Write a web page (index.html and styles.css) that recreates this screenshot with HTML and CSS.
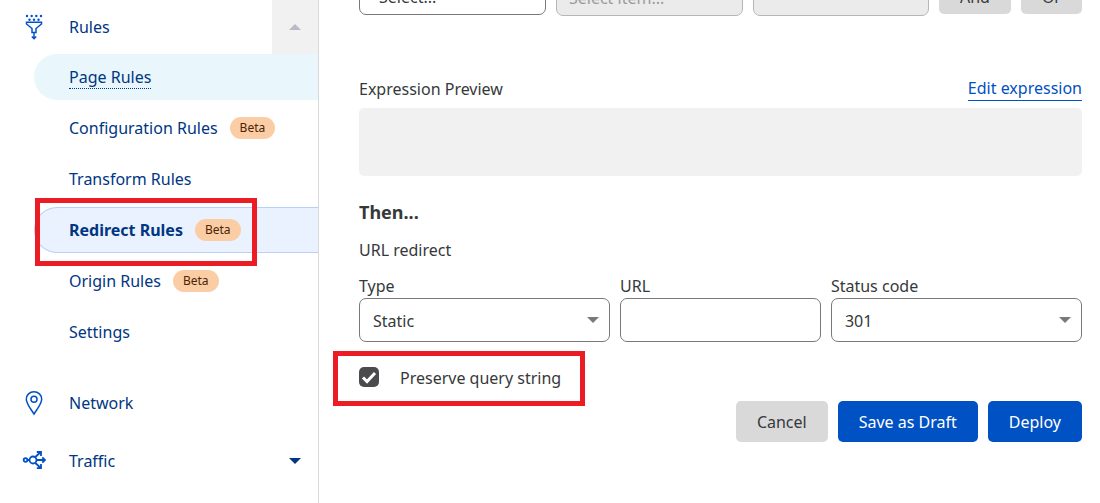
FILE: index.html
```html
<!DOCTYPE html>
<html lang="en">
<head>
    <meta charset="UTF-8">
    <meta name="viewport" content="width=device-width, initial-scale=1.0">
    <title>Redirect Rules</title>
    <link rel="stylesheet" href="styles.css">
</head>
<body>
    <nav class="sidebar">
        <div class="nav-row nav-row-open">
            <svg class="nav-icon" viewBox="0 0 24 26">
                <g fill="#0051c3">
                    <circle cx="5" cy="2" r="1.2"/><circle cx="9.7" cy="2" r="1.2"/><circle cx="14.3" cy="2" r="1.2"/><circle cx="19" cy="2" r="1.2"/>
                    <circle cx="7.5" cy="5.7" r="1.2"/><circle cx="12" cy="5.7" r="1.2"/><circle cx="16.5" cy="5.7" r="1.2"/>
                </g>
                <path d="M4.500 8.200H19.500V10L14 14.500V18.500H10V14.500L4.500 10ZM12 19V25M9.800 22.500L12 24.700L14.200 22.500"/>
            </svg>
            <a href="#">Rules</a>
            <button class="nav-toggle" aria-label="Collapse Rules"><span class="arrow-up"></span></button>
        </div>
        <ul class="subnav">
            <li><a class="subnav-link hovered" href="#"><span>Page Rules</span></a></li>
            <li><a class="subnav-link" href="#"><span>Configuration Rules</span><span class="badge">Beta</span></a></li>
            <li><a class="subnav-link" href="#"><span>Transform Rules</span></a></li>
            <li class="marked marked-nav"><a class="subnav-link active" href="#"><span>Redirect Rules</span><span class="badge">Beta</span></a></li>
            <li><a class="subnav-link" href="#"><span>Origin Rules</span><span class="badge">Beta</span></a></li>
            <li><a class="subnav-link" href="#"><span>Settings</span></a></li>
        </ul>
        <div class="nav-row">
            <svg class="nav-icon" viewBox="0 0 24 26">
                <path d="M12 24C8.500 18.500 4.300 13.500 4.300 9.200A7.700 7.500 0 0 1 19.700 9.200C19.700 13.500 15.500 18.500 12 24Z"/>
                <circle cx="12" cy="9.300" r="3"/>
            </svg>
            <a href="#">Network</a>
        </div>
        <div class="nav-row">
            <svg class="nav-icon nav-icon-bold" viewBox="0 0 24 26">
                <circle cx="3.500" cy="12" r="1.800"/>
                <circle cx="11" cy="12" r="3.500"/>
                <path d="M5.500 12H7.500M14.500 12H23M20.300 9.300L23 12L20.300 14.700M13.300 9L18.800 4M14.800 4H19V8M13.300 15L18.800 20M14.800 20.200H19V16"/>
            </svg>
            <a href="#">Traffic</a>
            <button class="nav-toggle" aria-label="Expand Traffic"><span class="arrow-down"></span></button>
        </div>
    </nav>

    <main class="content">
        <div class="condition-row">
            <select class="control condition-field" aria-label="Field">
                <option>Select...</option>
            </select>
            <select class="control condition-field" aria-label="Operator" disabled>
                <option>Select item...</option>
            </select>
            <input class="control condition-field" type="text" aria-label="Value" disabled>
            <button class="btn">And</button>
            <button class="btn">Or</button>
        </div>

        <div class="preview-header">
            <span>Expression Preview</span>
            <a class="edit-link" href="#">Edit expression</a>
        </div>
        <div class="preview-box"></div>

        <h2>Then...</h2>
        <p class="section-name">URL redirect</p>

        <div class="fields">
            <div class="field">
                <label for="type">Type</label>
                <div class="select-wrap">
                    <select class="control" id="type"><option>Static</option></select>
                </div>
            </div>
            <div class="field">
                <label for="url">URL</label>
                <input class="control" id="url" type="text">
            </div>
            <div class="field">
                <label for="status">Status code</label>
                <div class="select-wrap">
                    <select class="control" id="status"><option>301</option></select>
                </div>
            </div>
        </div>

        <div class="check-row marked marked-check">
            <span class="checkbox">
                <input type="checkbox" id="preserve" checked>
                <svg viewBox="0 0 20 20"><path d="M4 10.500L8 14.500L16 6"/></svg>
            </span>
            <label for="preserve">Preserve query string</label>
        </div>

        <div class="actions">
            <button class="btn">Cancel</button>
            <button class="btn btn-primary">Save as Draft</button>
            <button class="btn btn-primary">Deploy</button>
        </div>
    </main>
</body>
</html>
```
FILE: styles.css
```css
* {
    box-sizing: border-box;
}
body {
    margin: 0;
    display: flex;
    min-height: 100vh;
    overflow: hidden;
    font-family: "Noto Sans", "Open Sans", sans-serif;
    font-size: 16px;
    line-height: 24px;
    color: #36393a;
    background: #fff;
}
button, input, select {
    font: inherit;
    color: inherit;
}

/* Sidebar */
.sidebar {
    flex: 0 0 29%;
    border-right: 1px solid #d9d9d9;
}
.sidebar a {
    color: #003682;
    text-decoration: none;
}
.nav-row {
    display: flex;
    align-items: center;
    height: 58px;
    padding-left: 22px;
}
.nav-row-open {
    height: 54px;
}
.nav-icon {
    width: 24px;
    height: 26px;
    margin-right: 23px;
    fill: none;
    stroke: #0051c3;
    stroke-width: 1.5;
}
.nav-icon-bold {
    stroke-width: 1.8;
}
.nav-icon g {
    stroke: none;
}
.nav-toggle {
    display: flex;
    align-items: center;
    justify-content: center;
    align-self: stretch;
    width: 46px;
    margin-left: auto;
    padding: 0;
    border: 0;
    background: none;
}
.nav-row-open .nav-toggle {
    background: #f1f1f1;
}
.arrow-up, .arrow-down {
    border: 6px solid transparent;
}
.arrow-up {
    border-top: 0;
    border-bottom-color: #b9bac6;
}
.arrow-down {
    border-bottom: 0;
    border-top-color: #003682;
}
.subnav {
    display: flex;
    flex-direction: column;
    gap: 5px;
    margin: 0 0 19px;
    padding: 0 0 0 34px;
    list-style: none;
}
.subnav-link {
    display: flex;
    align-items: center;
    gap: 12px;
    height: 46px;
    padding-left: 34px;
    border: 1px solid transparent;
    border-right: 0;
    border-radius: 23px 0 0 23px;
}
.subnav-link.hovered {
    border-color: #e9f6fc;
    background: #e9f6fc;
}
.hovered span {
    line-height: 22px;
    border-bottom: 1px dotted #003682;
}
.subnav-link.active {
    border-color: #b9d0f5;
    background: #ebf2ff;
    font-weight: bold;
}
.badge {
    padding: 0 10px;
    border-radius: 11px;
    background: #fbcda5;
    color: #4a2504;
    font-size: 12px;
    font-weight: normal;
    line-height: 22px;
}

/* Red frames drawn over the highlighted items */
.marked {
    position: relative;
}
.marked::after {
    content: "";
    position: absolute;
    border: 5px solid #ec1c24;
    pointer-events: none;
}
.marked-nav::after {
    inset: -9px 61px -13px 1px;
}
.marked-check::after {
    inset: -16px -24px -19px -26px;
}

/* Main form */
.content {
    flex: 1;
    padding: 0 18px 0 40px;
}
.control {
    display: block;
    width: 100%;
    height: 44px;
    padding: 1px 13px 0;
    border: 1px solid #797979;
    border-radius: 7px;
    background: #fff;
    appearance: none;
}
.control:disabled {
    border-color: #b6b6b6;
    background: #ebebeb;
    color: #9a9a9a;
    opacity: 1;
}
.btn {
    height: 41px;
    padding: 1px 21px 0;
    border: 0;
    border-radius: 5px;
    background: #d9d9d9;
}
.btn-primary {
    background: #0051c3;
    color: #fff;
}
/* Mostly scrolled out above the top edge */
.condition-row {
    display: grid;
    grid-template-columns: 17fr 17fr 16fr auto auto;
    gap: 10px;
    height: 44px;
    margin-top: -29px;
}
.condition-field {
    padding: 8px 19px 0;
}
.condition-field:disabled {
    height: 45px;
    padding: 8px 12px 0;
}
.condition-row .btn {
    height: 43px;
    padding-top: 8px;
}
.preview-header {
    display: flex;
    justify-content: space-between;
    margin: 62px 0 7px;
}
.edit-link {
    border-bottom: 1px solid #0051c3;
    color: #0051c3;
    line-height: 23px;
    text-decoration: none;
}
.preview-box {
    height: 68px;
    border-radius: 5px;
    background: #f1f1f1;
}
h2 {
    margin: 24px 0 14px;
    font-size: 18px;
    line-height: 24px;
}
.section-name {
    margin: 0 0 12px;
}
.fields {
    display: grid;
    grid-template-columns: 5fr 4fr 5fr;
    gap: 10px;
}
.field label {
    display: block;
}
.select-wrap {
    position: relative;
}
.select-wrap::after {
    content: "";
    position: absolute;
    top: 19px;
    right: 11px;
    border: 6px solid transparent;
    border-top-color: #797979;
    border-bottom: 0;
    pointer-events: none;
}
.check-row {
    display: flex;
    align-items: center;
    gap: 21px;
    width: fit-content;
    height: 20px;
    margin: 25px 0 14px;
}
.check-row label {
    padding-top: 2px;
}
.checkbox {
    display: grid;
}
.checkbox input, .checkbox svg {
    grid-area: 1 / 1;
    width: 20px;
    height: 20px;
    margin: 0;
}
.checkbox input {
    border-radius: 5px;
    background: #4b4b4d;
    appearance: none;
}
.checkbox svg {
    fill: none;
    stroke: #fff;
    stroke-width: 3;
    pointer-events: none;
}
.actions {
    display: flex;
    justify-content: flex-end;
    gap: 10px;
}
```
